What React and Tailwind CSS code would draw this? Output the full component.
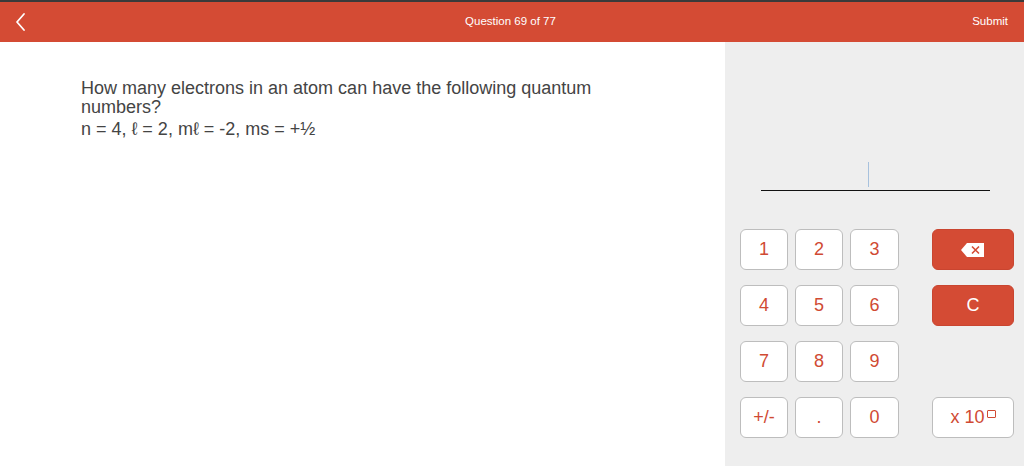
import React from "react";

const Key = ({ children, className = "bg-white text-[#d04a33] border-[#bdbdbd]" }) => (
  <button
    className={
      "h-[41px] rounded-[6px] border text-[18px] flex items-center justify-center " +
      className
    }
  >
    {children}
  </button>
);

const App = () => {
  return (
    <div
      className="w-[1024px] h-[466px] flex flex-col bg-white overflow-hidden"
      style={{ fontFamily: '"Liberation Sans", Arial, sans-serif' }}
    >
      <div className="h-[2px] bg-[#3a3a3a]" />
      <header className="h-[40px] bg-[#d44b34] flex items-center px-[14px] text-white">
        <div className="w-[60px]">
          <svg width="14" height="20" viewBox="0 0 14 20" fill="none">
            <path d="M10 2 L3 10 L10 18" stroke="white" strokeWidth="1.8" strokeLinecap="round" strokeLinejoin="round" />
          </svg>
        </div>
        <div className="flex-1 text-center text-[11.5px] pr-[3px]">Question 69 of 77</div>
        <div className="w-[60px] text-right text-[11.5px] pr-[2px]">Submit</div>
      </header>
      <div className="flex flex-1">
        <div className="w-[725px] pl-[81px] pt-[37px] text-[18px] leading-[19px] text-[#444]">
          <p className="w-[520px]">
            How many electrons in an atom can have the following quantum numbers?
          </p>
          <p className="mt-[3px]">n = 4, ℓ = 2, mℓ = -2, ms = +½</p>
        </div>
        <div className="flex-1 bg-[#eeeeee] pl-[15px] pr-[10px]">
          <div className="mt-[120px] ml-[21px] mr-[24px] h-[29px] border-b-[1.5px] border-[#111] flex justify-center pr-[15px] pb-[3px]">
            <div className="w-px bg-[#a7c1dd]" />
          </div>
          <div className="mt-[38px] grid grid-cols-[48px_48px_49px_1fr_82px] gap-x-[7px] gap-y-[15px]">
            <Key>1</Key>
            <Key>2</Key>
            <Key>3</Key>
            <div />
            <Key className="bg-[#d44b34] border-[#c94530]">
              <svg width="26" height="16" viewBox="0 0 26 16">
                <path d="M7 1 H24 V15 H7 L1 8 Z" fill="white" />
                <path d="M12 4.5 L19 11.5 M19 4.5 L12 11.5" stroke="#d44b34" strokeWidth="1.6" />
              </svg>
            </Key>
            <Key>4</Key>
            <Key>5</Key>
            <Key>6</Key>
            <div />
            <Key className="bg-[#d44b34] border-[#c94530] text-white">C</Key>
            <Key>7</Key>
            <Key>8</Key>
            <Key>9</Key>
            <div />
            <div />
            <Key>+/-</Key>
            <Key>.</Key>
            <Key>0</Key>
            <div />
            <Key>
              x 10
              <span className="inline-block w-[9px] h-[8px] border border-[#d04a33] rounded-[1px] ml-[2px] mb-[8px]" />
            </Key>
          </div>
        </div>
      </div>
    </div>
  );
};

export default App;
